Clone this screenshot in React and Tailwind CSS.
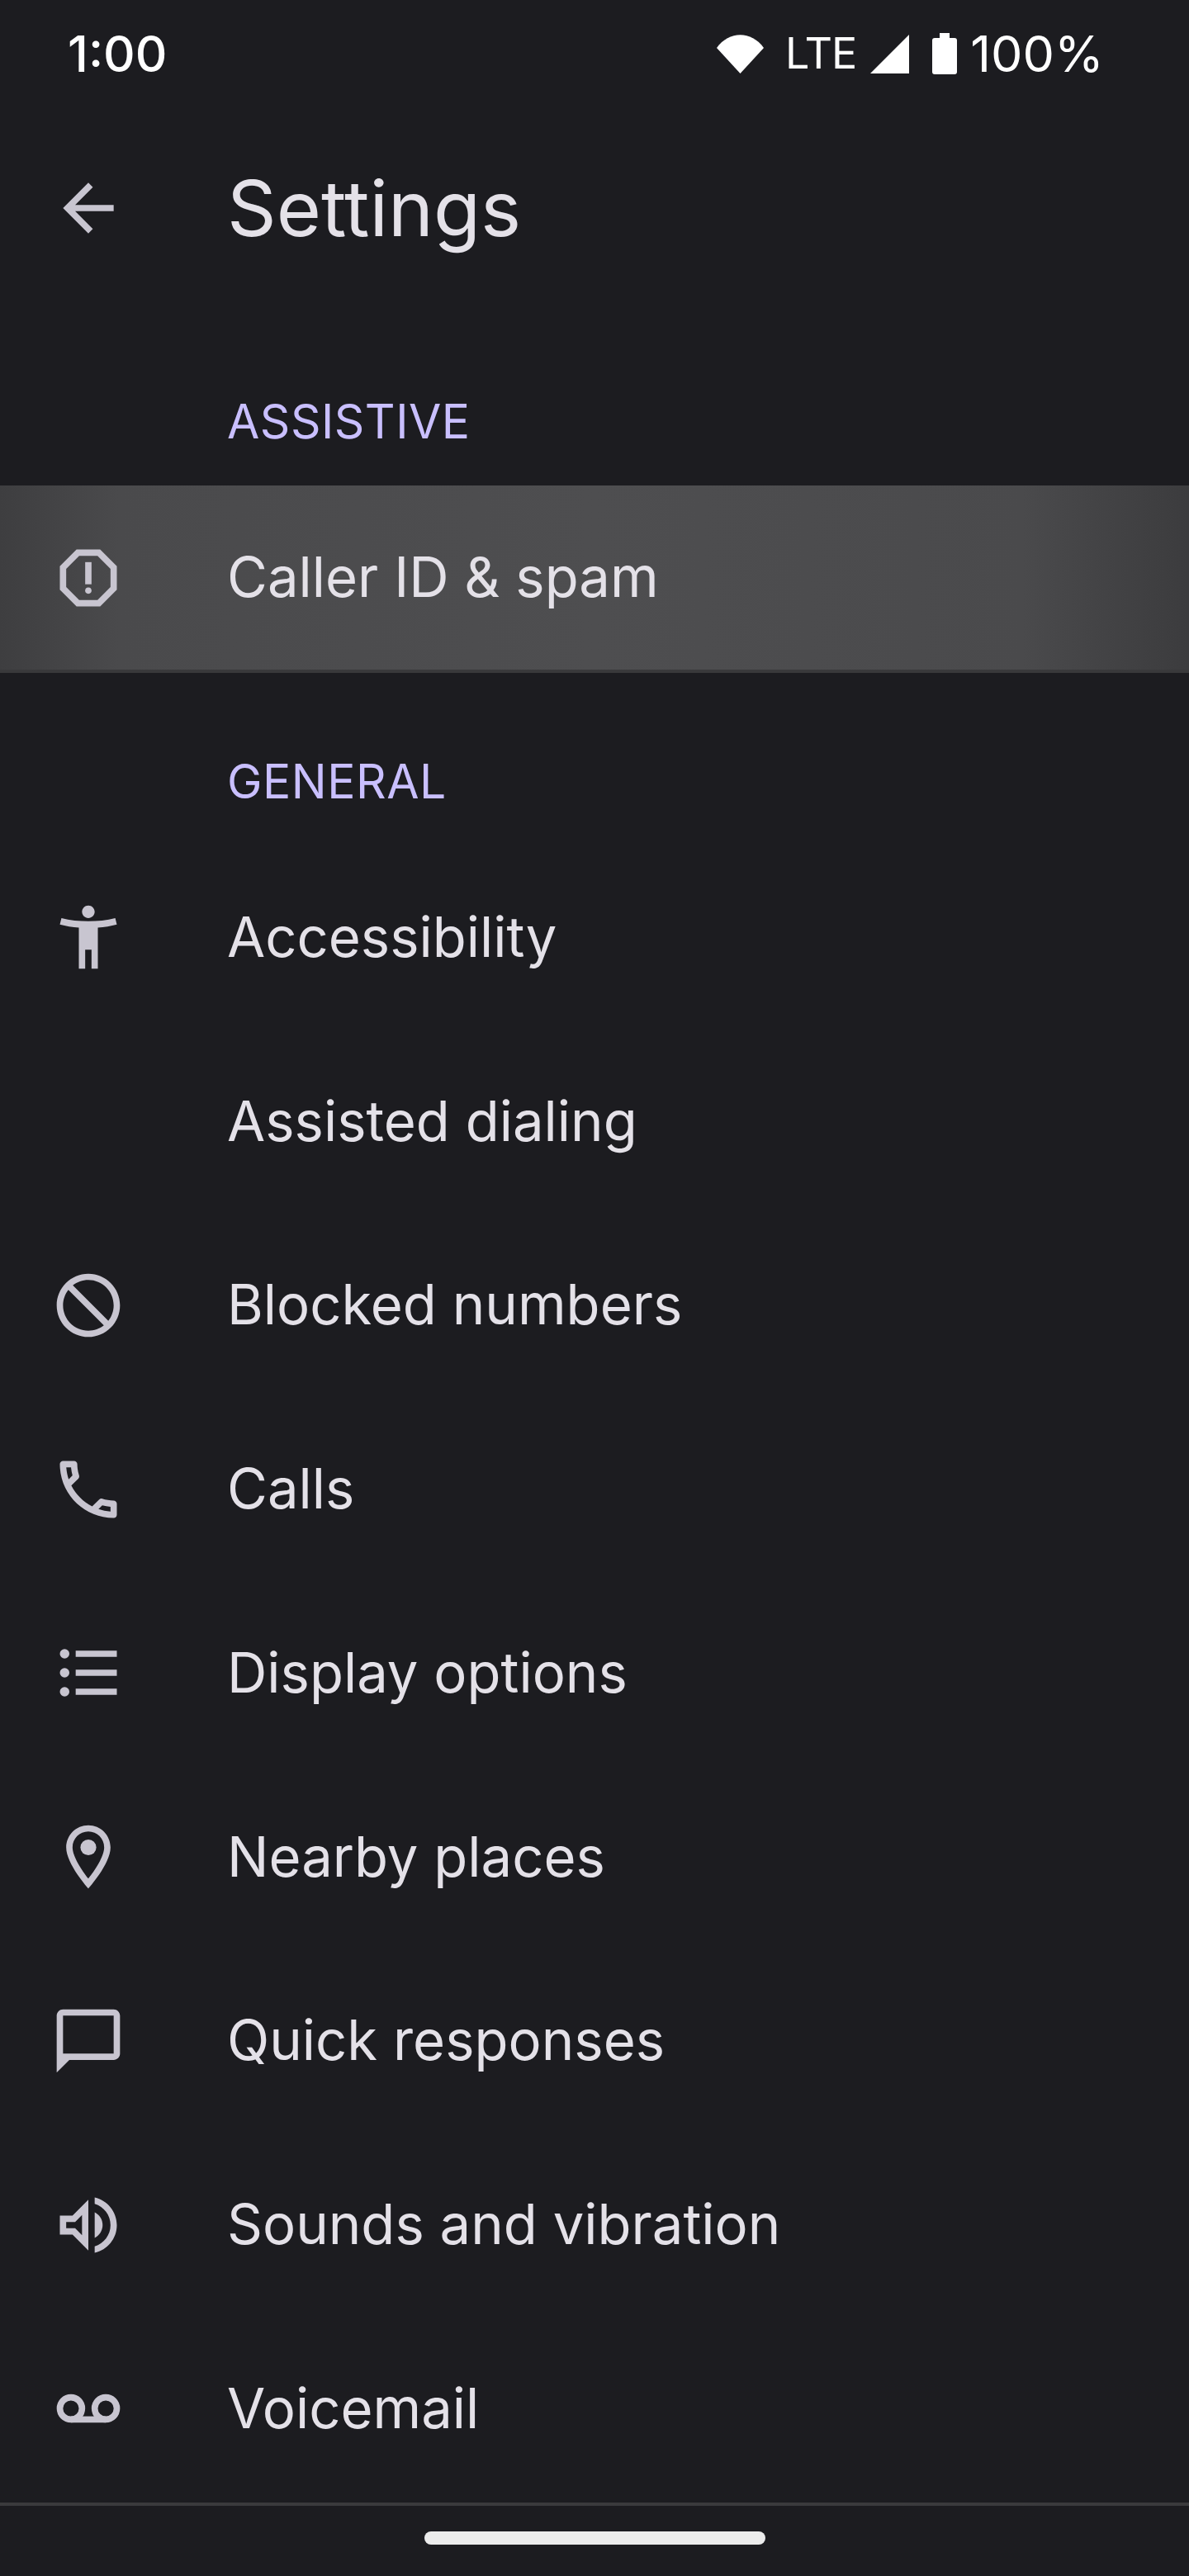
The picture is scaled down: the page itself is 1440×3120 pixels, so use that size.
import React from 'react';

const sans = "font-['Inter',sans-serif]";

function Icon({ children, className = 'w-[92px] h-[92px]' }) {
  return (
    <svg viewBox="0 0 24 24" className={`${className} fill-[#c8c5d0]`}>
      {children}
    </svg>
  );
}

const icons = {
  spam: (
    <Icon>
      <path d="M15.73 3H8.27L3 8.27v7.46L8.27 21h7.46L21 15.73V8.27L15.73 3zM19 14.9L14.9 19H9.1L5 14.9V9.1L9.1 5h5.8L19 9.1v5.8z" />
      <circle cx="12" cy="16" r="1" />
      <rect x="11" y="7" width="2" height="7" />
    </Icon>
  ),
  accessibility: (
    <Icon>
      <path d="M20.5 6c-2.61.7-5.67 1-8.5 1s-5.89-.3-8.5-1L3 8c1.86.5 4 .83 6 1v13h2v-6h2v6h2V9c2-.17 4.14-.5 6-1l-.5-2zM12 6c1.1 0 2-.9 2-2s-.9-2-2-2-2 .9-2 2 .9 2 2 2z" />
    </Icon>
  ),
  block: (
    <Icon>
      <path d="M12 2C6.48 2 2 6.48 2 12s4.48 10 10 10 10-4.48 10-10S17.52 2 12 2zm8 10c0 1.85-.63 3.55-1.69 4.9L7.1 5.69C8.45 4.63 10.15 4 12 4c4.42 0 8 3.58 8 8zM4 12c0-1.85.63-3.55 1.69-4.9L16.9 18.31C15.55 19.37 13.85 20 12 20c-4.42 0-8-3.58-8-8z" />
    </Icon>
  ),
  calls: (
    <Icon>
      <path d="M6.54 5c.06.89.21 1.76.45 2.59l-1.2 1.2c-.41-1.2-.67-2.47-.76-3.79h1.51m9.86 12.02c.85.24 1.72.39 2.6.45v1.49c-1.32-.09-2.59-.35-3.8-.75l1.2-1.19M7.5 3H4c-.55 0-1 .45-1 1 0 9.39 7.61 17 17 17 .55 0 1-.45 1-1v-3.49c0-.55-.45-1-1-1-1.24 0-2.45-.2-3.57-.57-.1-.04-.21-.05-.31-.05-.26 0-.51.1-.71.29l-2.2 2.2c-2.83-1.45-5.15-3.76-6.59-6.59l2.2-2.2c.28-.28.36-.67.25-1.02C8.7 6.45 8.5 5.25 8.5 4c0-.55-.45-1-1-1z" />
    </Icon>
  ),
  display: (
    <Icon>
      <path d="M8 5h13v2H8zM8 11h13v2H8zM8 17h13v2H8z" />
      <circle cx="4.5" cy="6" r="1.5" />
      <circle cx="4.5" cy="12" r="1.5" />
      <circle cx="4.5" cy="18" r="1.5" />
    </Icon>
  ),
  place: (
    <Icon>
      <path d="M12 2C8.13 2 5 5.13 5 9c0 5.25 7 13 7 13s7-7.75 7-13c0-3.87-3.13-7-7-7zM7 9c0-2.76 2.24-5 5-5s5 2.24 5 5c0 2.88-2.88 7.19-5 9.88C9.92 16.21 7 11.85 7 9z" />
      <circle cx="12" cy="9" r="2.5" />
    </Icon>
  ),
  quick: (
    <Icon>
      <path d="M20 2H4c-1.1 0-2 .9-2 2v18l4-4h14c1.1 0 2-.9 2-2V4c0-1.1-.9-2-2-2zm0 14H4V4h16v12z" />
    </Icon>
  ),
  sound: (
    <Icon>
      <path d="M3 9v6h4l5 5V4L7 9H3zm7-.17v6.34L7.83 13H5v-2h2.83L10 8.83zM14 3.23v2.06c2.89.86 5 3.54 5 6.71s-2.11 5.85-5 6.71v2.06c4.01-.91 7-4.49 7-8.77s-2.99-7.86-7-8.77z" />
      <path d="M16.5 12c0-1.77-1.02-3.29-2.5-4.03v8.05c1.48-.73 2.5-2.25 2.5-4.02z" />
    </Icon>
  ),
  voicemail: (
    <Icon>
      <circle cx="6.5" cy="12" r="3.5" className="fill-none stroke-[#c8c5d0] stroke-2" />
      <circle cx="17.5" cy="12" r="3.5" className="fill-none stroke-[#c8c5d0] stroke-2" />
      <rect x="6.5" y="14.5" width="11" height="2" />
    </Icon>
  ),
};

const general = [
  { label: 'Accessibility', icon: 'accessibility' },
  { label: 'Assisted dialing' },
  { label: 'Blocked numbers', icon: 'block' },
  { label: 'Calls', icon: 'calls' },
  { label: 'Display options', icon: 'display' },
  { label: 'Nearby places', icon: 'place' },
  { label: 'Quick responses', icon: 'quick' },
  { label: 'Sounds and vibration', icon: 'sound' },
  { label: 'Voicemail', icon: 'voicemail' },
];

function Row({ label, icon, className = 'h-[222.75px]' }) {
  return (
    <div className={`flex items-center ${className}`}>
      <div className="w-[275px] pl-[61px] shrink-0 flex items-center">{icons[icon]}</div>
      <span className={`${sans} text-[#e4e1e8] text-[67px] leading-none pb-[2px]`}>{label}</span>
    </div>
  );
}

function SectionLabel({ children, className }) {
  return (
    <div className={`${className} pl-[275px]`}>
      <div className={`${sans} text-[#c9bfff] text-[57px] leading-[64px] tracking-[0.5px]`}>{children}</div>
    </div>
  );
}

export default function App() {
  return (
    <div className={`w-[1440px] h-[3120px] bg-[#1c1c20] overflow-hidden flex flex-col ${sans}`}>
      {/* status bar */}
      <div className="h-[128px] pt-[2px] pl-[82px] pr-[103px] flex items-center justify-between text-white">
        <span className="text-[60px] leading-none font-medium">1:00</span>
        <div className="flex items-center">
          <svg viewBox="0 0 57 47" className="w-[57px] h-[47px] fill-white">
            <path d="M0 16 C15 -5 42 -5 57 16 L28.5 47 Z" />
          </svg>
          <span className="ml-[26px] text-[52px] leading-none tracking-[-1px]">LTE</span>
          <svg viewBox="0 0 47 47" className="ml-[17px] w-[47px] h-[47px] fill-white">
            <path d="M47 0 V47 H0 Z" />
          </svg>
          <div className="ml-[28px] w-[30px] h-[50px] flex flex-col items-center">
            <div className="w-[12px] h-[6px] bg-white" />
            <div className="w-[30px] h-[44px] bg-white rounded-[3px]" />
          </div>
          <span className="ml-[16px] text-[61px] leading-none">100%</span>
        </div>
      </div>

      {/* app bar */}
      <div className="h-[248px] flex items-center">
        <div className="w-[275px] pl-[61px] shrink-0">
          <Icon>
            <path d="M20 11H7.83l5.59-5.59L12 4l-8 8 8 8 1.41-1.41L7.83 13H20v-2z" />
          </Icon>
        </div>
        <span className="text-[#e4e1e8] text-[93px] leading-none">Settings</span>
      </div>

      <SectionLabel className="h-[212px] pt-[103px]">ASSISTIVE</SectionLabel>
      <div className="h-[227px] border-b-4 border-[#39393b] bg-[linear-gradient(90deg,#3e3e40_0%,#4a4a4c_10%,#4e4e50_50%,#4a4a4c_86%,#3c3c3e_100%)]">
        <Row label="Caller ID & spam" icon="spam" className="h-[223px]" />
      </div>

      <SectionLabel className="h-[209px] pt-[100px]">GENERAL</SectionLabel>
      {general.map((item) => (
        <Row key={item.label} {...item} />
      ))}

      {/* gesture bar */}
      <div className="mt-[2px] flex-1 border-t-4 border-[#3a3a3c] flex justify-center">
        <div className="mt-[31px] w-[413px] h-[16px] rounded-full bg-[#ececec]" />
      </div>
    </div>
  );
}
